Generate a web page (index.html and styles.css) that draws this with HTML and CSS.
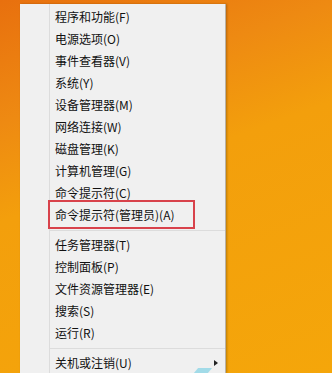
FILE: index.html
```html
<!DOCTYPE html>
<html lang="zh-CN">
<head>
    <meta charset="UTF-8">
    <title>Win+X 菜单</title>
    <link rel="stylesheet" href="styles.css">
</head>
<body>
    <div id="desk">
        <div class="menu">
            <div class="item">程序和功能(F)</div>
            <div class="item">电源选项(O)</div>
            <div class="item">事件查看器(V)</div>
            <div class="item">系统(Y)</div>
            <div class="item">设备管理器(M)</div>
            <div class="item">网络连接(W)</div>
            <div class="item">磁盘管理(K)</div>
            <div class="item">计算机管理(G)</div>
            <div class="item">命令提示符(C)</div>
            <div class="item marked">命令提示符(管理员)(A)</div>
            <div class="sep"></div>
            <div class="item">任务管理器(T)</div>
            <div class="item">控制面板(P)</div>
            <div class="item">文件资源管理器(E)</div>
            <div class="item">搜索(S)</div>
            <div class="item">运行(R)</div>
            <div class="sep"></div>
            <div class="item sub">关机或注销(U)<span class="arrow"></span></div>
        </div>
        <span class="sliver"></span>
    </div>
</body>
</html>
```

FILE: styles.css
```css
html, body {
    margin: 0;
    height: 100%;
    overflow: hidden;
}

#desk {
    position: relative;
    height: 100%;
    padding: 4px 0 0 20px;
    box-sizing: border-box;
    overflow: hidden;
    background: linear-gradient(160deg, #e8700e 0%, #ee8a12 25%, #f39f0c 45%, #f5a60a 100%);
}

.menu {
    position: relative;
    width: 206px;
    height: 100%;
    padding-top: 2px;
    box-sizing: border-box;
    background: #f0f0f0;
    border-right: 1px solid #b9b2a6;
    box-shadow: 1px 0 2px rgba(0, 0, 0, 0.25);
    font-family: "Noto Sans CJK SC", "Microsoft YaHei", sans-serif;
    font-size: 12px;
    color: #111;
}

/* icon column divider */
.menu::before {
    content: "";
    position: absolute;
    left: 29px;
    top: 0;
    bottom: 0;
    width: 1px;
    background: #dcdcdc;
}

.item {
    position: relative;
    height: 22px;
    line-height: 22px;
    padding-left: 35px;
    white-space: nowrap;
}

.sep {
    height: 8px;
    margin-left: 30px;
    background: linear-gradient(#dcdcdc, #dcdcdc) center / 100% 1px no-repeat;
}

.marked::after {
    content: "";
    position: absolute;
    left: 28px;
    top: -4px;
    width: 143px;
    height: 25px;
    border: 2px solid #d8424b;
}

.arrow {
    position: absolute;
    left: 194px;
    top: 8px;
    border-left: 4px solid #222;
    border-top: 3.5px solid transparent;
    border-bottom: 3.5px solid transparent;
}

.sliver {
    position: absolute;
    left: 196px;
    top: 368px;
    width: 14px;
    height: 5px;
    background: #8fd6e6;
    transform: skewX(-40deg);
    opacity: 0.8;
}
```
